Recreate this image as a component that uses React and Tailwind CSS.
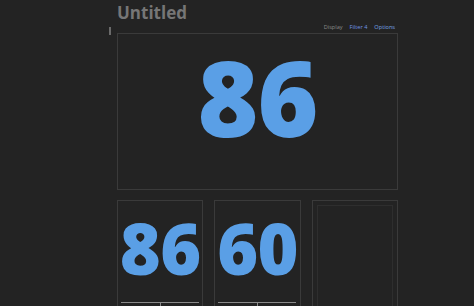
export default function App() {
  const digit = "font-['Open_Sans',sans-serif] font-extrabold text-[#5a9fe6] leading-none tracking-[-0.01em]";
  return (
    <div className="w-[474px] h-[306px] overflow-hidden bg-[#232323] font-['Open_Sans',sans-serif]">
      <div className="ml-[117px] w-[281px] flex flex-col">
        <div className="pt-[4px] h-[22px] text-[17px] font-bold leading-none text-[#767676]">Untitled</div>
        <div className="relative h-[11px] flex items-center justify-end gap-[7px] pr-[3px] pt-[1px] text-[5.6px] font-medium leading-none">
          <span className="text-[#8a8a8a]">Display</span>
          <span className="text-[#7095e6]">Filter 4</span>
          <span className="text-[#76a4e6]">Options</span>
          <div className="absolute left-[-8px] top-[5px] w-[2px] h-[8px] border-x border-[#6a6a6a]"></div>
        </div>
        <div className="h-[157px] border border-[#3a3a3a] flex justify-center pt-[11px]">
          <span className={`${digit} text-[104px]`}>86</span>
        </div>
        <div className="mt-[10px] grid grid-cols-3 gap-[11px]">
          {["86", "60"].map((n) => (
            <div key={n} className="h-[120px] border border-[#3a3a3a] flex flex-col items-center pt-[12px]">
              <span className={`${digit} text-[70px]`}>{n}</span>
              <div className="relative mt-[19px] w-[78px] h-[1px] bg-[#8a8a8a]">
                <div className="absolute left-1/2 top-0 w-[1px] h-[5px] bg-[#8a8a8a]"></div>
              </div>
            </div>
          ))}
          <div className="h-[120px] border border-[#3a3a3a] p-[4px]">
            <div className="h-full border border-[#2e2e2e]"></div>
          </div>
        </div>
      </div>
    </div>
  );
}
